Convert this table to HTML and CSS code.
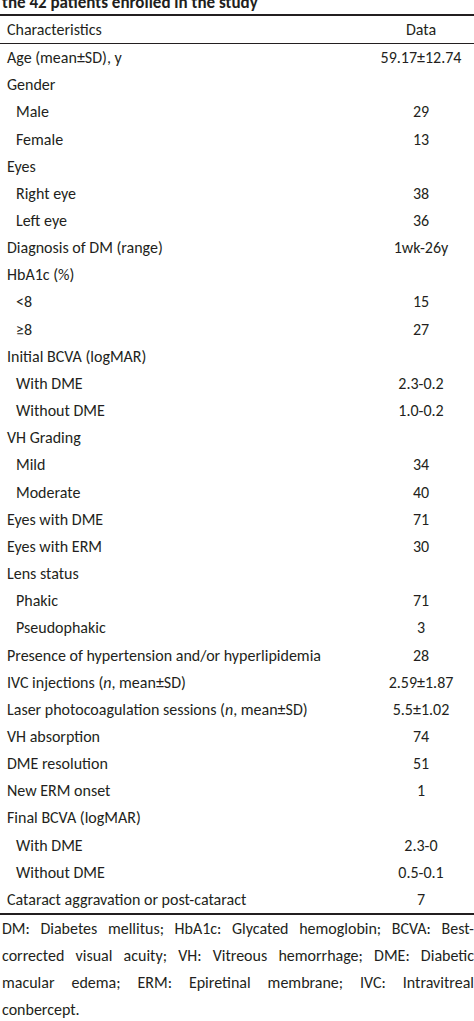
FILE: index.html
```html
<!DOCTYPE html>
<html>
<head>
<meta charset="utf-8">
<link rel="stylesheet" href="styles.css">
</head>
<body>
<div class="page">
  <div class="title">the 42 patients enrolled in the study</div>
  <table class="tbl">
    <thead>
      <tr><th class="c1">Characteristics</th><th class="c2">Data</th></tr>
    </thead>
    <tbody>
      <tr><td>Age (mean±SD), y</td><td class="d">59.17±12.74</td></tr>
      <tr><td>Gender</td><td class="d"></td></tr>
      <tr><td class="in">Male</td><td class="d">29</td></tr>
      <tr><td class="in">Female</td><td class="d">13</td></tr>
      <tr><td>Eyes</td><td class="d"></td></tr>
      <tr><td class="in">Right eye</td><td class="d">38</td></tr>
      <tr><td class="in">Left eye</td><td class="d">36</td></tr>
      <tr><td>Diagnosis of DM (range)</td><td class="d">1wk-26y</td></tr>
      <tr><td>HbA1c (%)</td><td class="d"></td></tr>
      <tr><td class="in">&lt;8</td><td class="d">15</td></tr>
      <tr><td class="in">≥8</td><td class="d">27</td></tr>
      <tr><td>Initial BCVA (logMAR)</td><td class="d"></td></tr>
      <tr><td class="in">With DME</td><td class="d">2.3-0.2</td></tr>
      <tr><td class="in">Without DME</td><td class="d">1.0-0.2</td></tr>
      <tr><td>VH Grading</td><td class="d"></td></tr>
      <tr><td class="in">Mild</td><td class="d">34</td></tr>
      <tr><td class="in">Moderate</td><td class="d">40</td></tr>
      <tr><td>Eyes with DME</td><td class="d">71</td></tr>
      <tr><td>Eyes with ERM</td><td class="d">30</td></tr>
      <tr><td>Lens status</td><td class="d"></td></tr>
      <tr><td class="in">Phakic</td><td class="d">71</td></tr>
      <tr><td class="in">Pseudophakic</td><td class="d">3</td></tr>
      <tr><td>Presence of hypertension and/or hyperlipidemia</td><td class="d">28</td></tr>
      <tr><td>IVC injections (<i>n</i>, mean±SD)</td><td class="d">2.59±1.87</td></tr>
      <tr><td>Laser photocoagulation sessions (<i>n</i>, mean±SD)</td><td class="d">5.5±1.02</td></tr>
      <tr><td>VH absorption</td><td class="d">74</td></tr>
      <tr><td>DME resolution</td><td class="d">51</td></tr>
      <tr><td>New ERM onset</td><td class="d">1</td></tr>
      <tr><td>Final BCVA (logMAR)</td><td class="d"></td></tr>
      <tr><td class="in">With DME</td><td class="d">2.3-0</td></tr>
      <tr><td class="in">Without DME</td><td class="d">0.5-0.1</td></tr>
      <tr><td>Cataract aggravation or post-cataract</td><td class="d">7</td></tr>
    </tbody>
  </table>
  <div class="note">
    <span class="ln">DM: Diabetes mellitus; HbA1c: Glycated hemoglobin; BCVA: Best-</span>
    <span class="ln">corrected visual acuity; VH: Vitreous hemorrhage; DME: Diabetic</span>
    <span class="ln">macular edema; ERM: Epiretinal membrane; IVC: Intravitreal</span>
    <span class="ln last">conbercept.</span>
  </div>
</div>
</body>
</html>
```

FILE: styles.css
```css
html, body {
  margin: 0;
  padding: 0;
  background: #ffffff;
}
body {
  width: 474px;
  height: 1021px;
  overflow: hidden;
  font-family: Carlito, Lato, "Liberation Sans", sans-serif;
  color: #231f20;
}
.page {
  width: 474px;
}
.title {
  font-weight: bold;
  font-size: 17px;
  line-height: 20px;
  height: 20px;
  margin-top: -7px;
  padding-left: 2px;
}
.tbl {
  width: 474px;
  border-collapse: collapse;
  font-size: 16px;
  border-top: 2px solid #231f20;
  border-bottom: 2px solid #231f20;
  margin-top: 1px;
}
.tbl th {
  font-weight: normal;
  height: 27px;
  padding: 0;
  border-bottom: 1.5px solid #231f20;
}
.tbl th.c1 {
  text-align: left;
  padding-left: 7px;
}
.tbl th.c2 {
  text-align: center;
  width: 106px;
}
.tbl td {
  height: 27.16px;
  padding: 0 0 0 7px;
  vertical-align: middle;
  text-align: left;
  white-space: nowrap;
}
.tbl td.in {
  padding-left: 16px;
}
.tbl td.d {
  text-align: center;
  width: 106px;
  padding: 0;
}
.note {
  font-size: 16px;
  line-height: 27px;
  padding-left: 2px;
}
.ln {
  display: block;
  text-align: justify;
  text-align-last: justify;
  white-space: nowrap;
}
.ln.last {
  text-align-last: left;
}
```
